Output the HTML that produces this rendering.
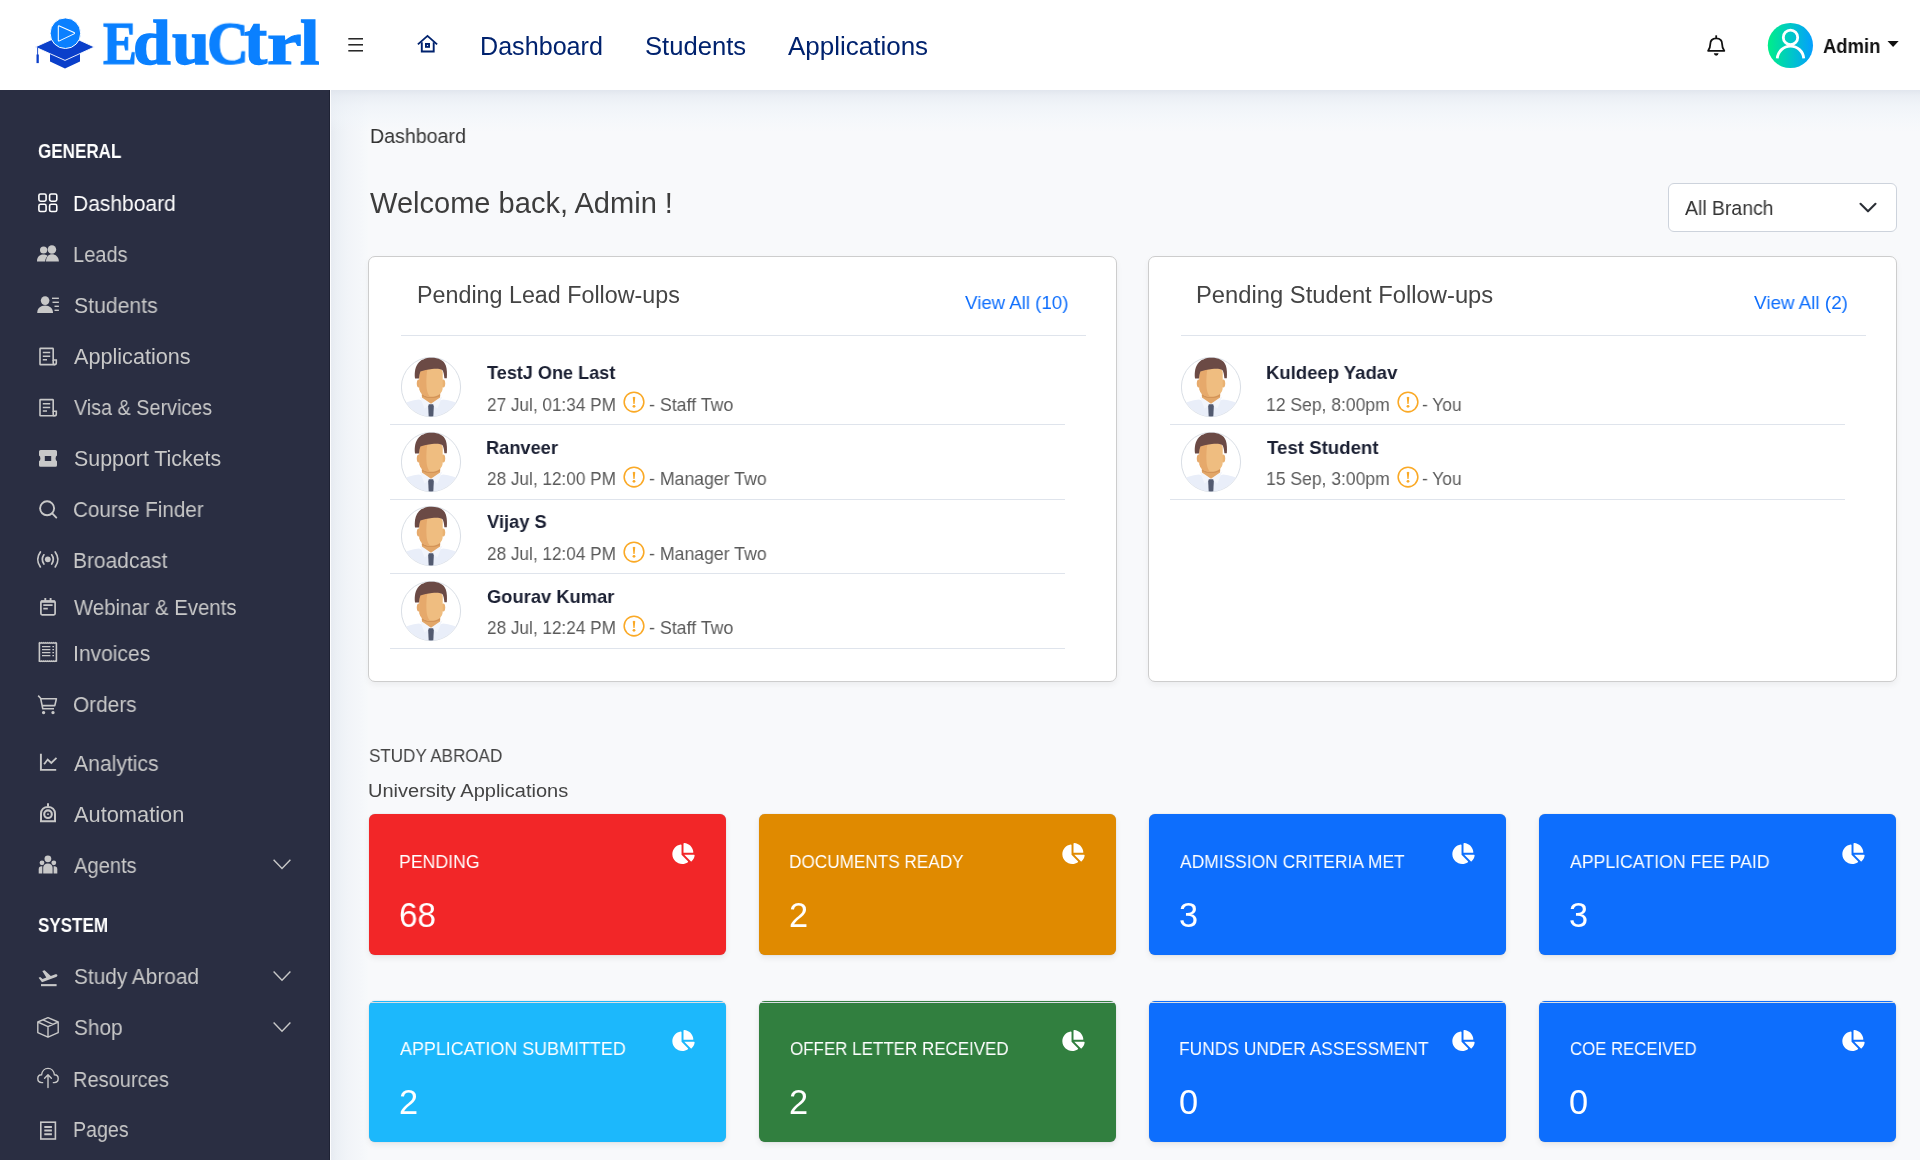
<!DOCTYPE html>
<html><head><meta charset="utf-8"><title>EduCtrl Dashboard</title>
<style>
html,body{margin:0;padding:0;}
body{width:1920px;height:1160px;overflow:hidden;position:relative;background:#f8f9fb;font-family:'Liberation Sans',sans-serif;}
.t{position:absolute;white-space:nowrap;line-height:1;transform-origin:0 0;will-change:transform;}
.abs{position:absolute;}
#hdr{position:absolute;left:0;top:0;width:1920px;height:90px;background:#fff;}
#side{position:absolute;left:0;top:90px;width:330px;height:1070px;background:#2a2e42;}
#sideedge{position:absolute;left:329px;top:90px;width:1px;height:1070px;background:#1e2234;}
#shadeL{position:absolute;left:331px;top:90px;width:37px;height:1070px;background:linear-gradient(90deg,#e7ebf1 0,#ecf0f5 6px,#f1f4f8 16px,#f5f7fa 30px,#f7f9fb 37px);}
#shadeT{position:absolute;left:330px;top:90px;width:1590px;height:42px;background:linear-gradient(180deg,rgba(224,229,237,.95) 0,rgba(230,235,242,.75) 6px,rgba(236,241,247,.6) 16px,rgba(240,245,250,.45) 28px,rgba(248,249,251,0) 42px);}
#whiteline{position:absolute;left:330px;top:90px;width:1px;height:1070px;background:#fdfdfe;}
.card{position:absolute;background:#fff;border:1px solid #cdcdcd;border-radius:7px;box-sizing:border-box;box-shadow:0 3px 6px rgba(0,0,0,.05);}
.hr{position:absolute;height:1px;background:#dfe4ec;}
.stat{position:absolute;width:357.5px;height:141px;border-radius:6px;box-shadow:0 0 1px rgba(0,0,0,.3),0 3px 6px rgba(0,0,0,.07);}
.pie{position:absolute;width:23px;height:21px;margin:-1px 0 0 -0.6px;}
.av{position:absolute;width:61px;height:61px;}
.warn{position:absolute;width:22px;height:22px;}
.si{position:absolute;}
</style></head><body>
<div id="hdr"></div>
<div id="side"></div>
<div id="shadeL"></div>
<div id="shadeT"></div>
<div id="sideedge"></div>
<div id="whiteline"></div>

<!-- logo icon -->
<svg class="abs" style="left:0;top:0" width="100" height="80" viewBox="0 0 100 80">
  <polygon points="50,53 65,60.2 80,53 80,61.5 65,68.6 50,61.5" fill="#0a3fca"/>
  <polygon points="35.2,47 65,33.6 94.4,47 65,60.4" fill="#0a3fca" stroke="#fff" stroke-width="0.9"/>
  <line x1="37.6" y1="47.5" x2="37.6" y2="57" stroke="#0a3fca" stroke-width="0.9"/>
  <rect x="36.5" y="54.5" width="2.3" height="8.6" fill="#0a3fca"/>
  <circle cx="65.4" cy="33.2" r="15.3" fill="#0a80ff" stroke="#fff" stroke-width="1"/>
  <path d="M59.4 25.9 L74 32.5 Q75.1 33.2 74 33.9 L59.4 40.9 Q58.3 41.4 58.3 40.2 L58.3 27 Q58.3 25.4 59.4 25.9 Z" fill="none" stroke="#fff" stroke-width="1.05"/>
</svg>

<!-- hamburger -->
<svg class="abs" style="left:346px;top:36px" width="20" height="18" viewBox="0 0 20 18">
  <rect x="2.3" y="2.1" width="14.7" height="1.4" fill="#111"/>
  <rect x="2.3" y="8.1" width="14.7" height="1.4" fill="#111"/>
  <rect x="2.3" y="14.1" width="14.7" height="1.4" fill="#111"/>
</svg>
<!-- home -->
<svg class="abs" style="left:416px;top:33px" width="24" height="22" viewBox="0 0 24 22">
  <path d="M1.9 11.4 L11.5 2.9 L21.1 11.4" fill="none" stroke="#00226e" stroke-width="1.9" stroke-linejoin="miter"/>
  <path d="M5.8 9.2 V18.5 H17.7 V9.2" fill="none" stroke="#00226e" stroke-width="1.9"/>
  <rect x="9.95" y="10.95" width="3.1" height="2.9" fill="none" stroke="#00226e" stroke-width="1.9"/>
</svg>

<!-- bell -->
<svg class="abs" style="left:1704px;top:33px" width="26" height="26" viewBox="0 0 26 26">
  <path d="M4.1 17.8 C5.9 15.6 6.3 13.6 6.3 11 C6.3 7.3 8.8 5.3 12.2 5.3 C15.6 5.3 18.1 7.3 18.1 11 C18.1 13.6 18.5 15.6 20.3 17.8 Z" fill="none" stroke="#111" stroke-width="1.8" stroke-linejoin="round"/>
  <rect x="11.3" y="2.2" width="1.8" height="3" rx="0.6" fill="#111"/>
  <path d="M9.8 20.3 H14.6 Q14.3 22.7 12.2 22.7 Q10.1 22.7 9.8 20.3 Z" fill="#111"/>
</svg>
<!-- avatar -->
<svg class="abs" style="left:1767px;top:22px" width="47" height="47" viewBox="0 0 47 47">
  <defs><linearGradient id="ag" x1="0" y1="0" x2="1" y2="0"><stop offset="0" stop-color="#00ee88"/><stop offset="0.5" stop-color="#00c8c6"/><stop offset="1" stop-color="#049eff"/></linearGradient></defs>
  <circle cx="23.4" cy="23.5" r="22.6" fill="url(#ag)"/>
  <circle cx="23.5" cy="15.4" r="7.2" fill="none" stroke="#fff" stroke-width="2.8"/>
  <path d="M10.25 36.3 A13.3 13.3 0 0 1 36.75 36.3" fill="none" stroke="#fff" stroke-width="2.8"/>
</svg>
<!-- caret -->
<svg class="abs" style="left:1886px;top:40px" width="14" height="8" viewBox="0 0 14 8">
  <path d="M1.5 1 H12.7 L7.1 7 Z" fill="#111"/>
</svg>

<!-- select -->
<div class="abs" style="left:1668px;top:183px;width:229px;height:49px;box-sizing:border-box;border:1px solid #cdd3dc;border-radius:6px;background:#fff;"></div>
<svg class="abs" style="left:1858px;top:200px" width="20" height="16" viewBox="0 0 20 16">
  <path d="M2.5 3.8 L10 11.3 L17.5 3.8" fill="none" stroke="#2b2f36" stroke-width="2.1" stroke-linecap="round" stroke-linejoin="round"/>
</svg>

<!-- cards -->
<div class="card" style="left:368px;top:256px;width:749px;height:426px;"></div>
<div class="card" style="left:1148px;top:256px;width:749px;height:426px;"></div>
<div class="hr" style="left:401px;top:335px;width:685px;"></div>
<div class="hr" style="left:1181px;top:335px;width:685px;"></div>
<div class="hr" style="left:390px;top:424px;width:675px;"></div>
<div class="hr" style="left:390px;top:499px;width:675px;"></div>
<div class="hr" style="left:390px;top:573px;width:675px;"></div>
<div class="hr" style="left:390px;top:648px;width:675px;"></div>
<div class="hr" style="left:1170px;top:424px;width:675px;"></div>
<div class="hr" style="left:1170px;top:499px;width:675px;"></div>

<svg width="0" height="0" style="position:absolute">
 <defs>
  <symbol id="person" viewBox="0 0 61 61">
   <clipPath id="pc"><circle cx="30" cy="30" r="29.4"/></clipPath>
   <circle cx="30" cy="30" r="29.6" fill="#fff" stroke="#d5dae2" stroke-width="0.9"/>
   <g clip-path="url(#pc)">
    <path d="M-2 62 L-2 50 C3 45.5 10 43.6 18 42.6 L30 46.8 L42 42.6 C50 43.6 57 45.5 62 50 L62 62 Z" fill="#e9eef9"/>
    <path d="M18.6 39.6 L30 46.8 L23.6 51.4 Z" fill="#f2f5fc"/>
    <path d="M41.4 39.6 L30 46.8 L36.4 51.4 Z" fill="#f2f5fc"/>
    <path d="M20.9 33 H39.1 V40.4 L30 46.8 L20.9 40.4 Z" fill="#e2a668"/>
    <path d="M20.9 33 H39.1 V39.2 C36 40.6 33 41 30 41 C27 41 24 40.6 20.9 39.2 Z" fill="#d39458"/>
    <path d="M27.8 47.2 H32.2 L32.8 49.6 L32.2 62 H27.8 L27.2 49.6 Z" fill="#525a70"/>
   </g>
   <ellipse cx="17.8" cy="26.6" rx="2" ry="4" fill="#e6a96b"/>
   <ellipse cx="42.2" cy="26.6" rx="2" ry="4" fill="#eab272"/>
   <path d="M18.3 15.5 C18.3 12 22 10.6 30 10.6 C38 10.6 41.7 12 41.7 15.5 V30.5 C41.7 36.6 36.6 39.8 30 39.8 C23.4 39.8 18.3 36.6 18.3 30.5 Z" fill="#efbd80"/>
   <path d="M18.3 15.5 C18.3 12.6 21 11.2 27 10.8 C25.6 14 25.4 20 25.4 27 C25.4 33 26.6 37.2 29 39.8 C22.8 39.5 18.3 36.4 18.3 30.5 Z" fill="#e6a96b"/>
   <path d="M14 21.6 C13.2 14.6 14.4 9 18 5.2 C19.6 3.6 21 2.6 22.4 2.4 C24.6 1 27.5 0.7 30.5 0.7 C37.5 0.7 43 3.2 44.8 8.4 C46 12 46.2 16.6 45.8 21.2 L43.4 21.2 C43 17.5 42.6 14.8 41.5 13.2 C38.6 11.6 34.8 11.6 31 12.1 C26.5 12.8 22.6 13.4 19.4 14.6 C18.6 16.8 18.2 19 18 21.6 Z" fill="#6b4a45"/>
  </symbol>
  <symbol id="warn" viewBox="0 0 22 22">
   <circle cx="11" cy="11" r="9.85" fill="none" stroke="#faa926" stroke-width="1.55"/>
   <path d="M9.75 6.3 Q11 5.1 12.25 6.3 L11.6 12.9 H10.4 Z" fill="#faa926"/>
   <circle cx="11" cy="15.3" r="1.4" fill="#faa926"/>
  </symbol>
  <symbol id="pie" viewBox="0 0 544 512">
   <path d="M527.79 288H290.5l158.03 158.03c6.04 6.04 15.98 6.53 22.19.68 38.7-36.46 65.32-85.61 73.13-140.86 1.34-9.46-6.51-17.85-16.06-17.85zm-15.83-64.8C503.72 103.74 408.26 8.28 288.8.04 279.68-.59 272 7.1 272 16.24V240h223.77c9.140 0 16.82-7.68 16.19-16.8zM224 288V50.71c0-9.55-8.39-17.4-17.84-16.06C86.99 51.49-4.1 155.6.14 280.37 4.5 408.51 114.83 513.59 243.03 511.980c50.4-.63 96.97-16.87 135.26-44.03 7.9-5.6 8.42-17.23 1.57-24.08L224 288z" fill="#fff"/>
  </symbol>
 </defs>
</svg>

<svg class="av" style="left:401px;top:356.9px"><use href="#person"/></svg>
<svg class="av" style="left:401px;top:431.7px"><use href="#person"/></svg>
<svg class="av" style="left:401px;top:506.3px"><use href="#person"/></svg>
<svg class="av" style="left:401px;top:580.9px"><use href="#person"/></svg>
<svg class="av" style="left:1181px;top:356.9px"><use href="#person"/></svg>
<svg class="av" style="left:1181px;top:431.7px"><use href="#person"/></svg>

<svg class="warn" style="left:623.2px;top:391.4px"><use href="#warn"/></svg>
<svg class="warn" style="left:623.2px;top:466.2px"><use href="#warn"/></svg>
<svg class="warn" style="left:623.2px;top:540.6px"><use href="#warn"/></svg>
<svg class="warn" style="left:623.2px;top:615.3px"><use href="#warn"/></svg>
<svg class="warn" style="left:1397px;top:391.4px"><use href="#warn"/></svg>
<svg class="warn" style="left:1397px;top:466.2px"><use href="#warn"/></svg>

<!-- stat cards -->
<div class="stat" style="left:368.5px;top:813.5px;background:#f22628"></div>
<div class="stat" style="left:758.5px;top:813.5px;background:#e08a00"></div>
<div class="stat" style="left:1148.5px;top:813.5px;background:#0d6efd"></div>
<div class="stat" style="left:1538.5px;top:813.5px;background:#0d6efd"></div>
<div class="stat" style="left:368.5px;top:1000.5px;background:linear-gradient(180deg,transparent 1px,#d9dde3 1px,#d9dde3 2px,transparent 2px) #1cb8fc"></div>
<div class="stat" style="left:758.5px;top:1000.5px;background:linear-gradient(180deg,transparent 1px,#d9dde3 1px,#d9dde3 2px,transparent 2px) #317f3f"></div>
<div class="stat" style="left:1148.5px;top:1000.5px;background:linear-gradient(180deg,transparent 1px,#d9dde3 1px,#d9dde3 2px,transparent 2px) #0d6efd"></div>
<div class="stat" style="left:1538.5px;top:1000.5px;background:linear-gradient(180deg,transparent 1px,#d9dde3 1px,#d9dde3 2px,transparent 2px) #0d6efd"></div>
<svg class="pie" style="left:672.7px;top:843.6px"><use href="#pie"/></svg>
<svg class="pie" style="left:1062.7px;top:843.6px"><use href="#pie"/></svg>
<svg class="pie" style="left:1452.7px;top:843.6px"><use href="#pie"/></svg>
<svg class="pie" style="left:1842.7px;top:843.6px"><use href="#pie"/></svg>
<svg class="pie" style="left:672.7px;top:1030.6px"><use href="#pie"/></svg>
<svg class="pie" style="left:1062.7px;top:1030.6px"><use href="#pie"/></svg>
<svg class="pie" style="left:1452.7px;top:1030.6px"><use href="#pie"/></svg>
<svg class="pie" style="left:1842.7px;top:1030.6px"><use href="#pie"/></svg>

<!-- sidebar icons -->
<svg class="abs" style="left:0;top:90px" width="330" height="1070" viewBox="0 90 330 1070">
 <g fill="none" stroke="#fff" stroke-width="1.6">
  <rect x="38.9" y="194" width="7.2" height="7.2" rx="1.6"/>
  <rect x="49.6" y="194" width="7.2" height="7.2" rx="1.6"/>
  <rect x="38.9" y="204.3" width="7.2" height="7.2" rx="1.6"/>
  <rect x="49.6" y="204.3" width="7.2" height="7.2" rx="1.6"/>
 </g>
 <g fill="#c8c8c8">
  <!-- leads -->
  <circle cx="43.6" cy="250" r="3.6"/>
  <path d="M37 261.5 C37 257 39.5 254.6 43.6 254.6 C45.5 254.6 46.8 255.2 47.5 256 C46 257.4 45.3 259.2 45.2 261.5 Z"/>
  <circle cx="51.9" cy="249.5" r="4.3"/>
  <path d="M46 261.5 C46 257 48.5 254.2 52 254.2 C55.5 254.2 58.9 257 58.9 261.5 Z"/>
  <!-- students -->
  <circle cx="45.1" cy="300.6" r="4.3"/>
  <path d="M37.2 313 C37.2 308.4 40.5 305.6 45.1 305.6 C49.7 305.6 53 308.4 53 313 Z"/>
  <rect x="52" y="297.6" width="6.9" height="1.4"/>
  <rect x="52.5" y="301.6" width="6.4" height="1.4"/>
  <rect x="54.5" y="305.6" width="4.4" height="1.4"/>
  <rect x="54.5" y="309.6" width="4.4" height="1.4"/>
  <!-- ticket -->
  <path d="M39 451.5 Q39 450 40.5 450 H55.5 Q57 450 57 451.5 V455.6 Q55.6 456.2 55.6 458.4 Q55.6 460.6 57 461.2 V465.3 Q57 466.8 55.5 466.8 H40.5 Q39 466.8 39 465.3 V461.2 Q40.4 460.6 40.4 458.4 Q40.4 456.2 39 455.6 Z M44.8 456.1 V460.9 H51.2 V456.1 Z" fill-rule="evenodd"/>
  <!-- broadcast dot -->
  <circle cx="47.8" cy="559.3" r="2.9"/>
  <!-- agents -->
  <circle cx="47.9" cy="858.8" r="3.4"/>
  <circle cx="42" cy="862.8" r="2.4"/>
  <circle cx="53.8" cy="862.8" r="2.4"/>
  <path d="M43.2 873.5 V867.8 C43.2 865 45 863.4 47.9 863.4 C50.8 863.4 52.6 865 52.6 867.8 V873.5 Z"/>
  <path d="M38.7 873.5 V869.2 C38.7 867 39.8 866.3 41.6 866.3 L42.3 866.3 L42.3 873.5 Z"/>
  <path d="M57.3 873.5 V869.2 C57.3 867 56.2 866.3 54.4 866.3 L53.6 866.3 L53.6 873.5 Z"/>
  <!-- study abroad plane -->
  <path d="M38.6 977.8 L40.2 977 L42.6 979 L46.3 977.6 L42.3 971 L44.6 970.2 L50.8 976 L54.8 974.5 C56.3 974 57.4 974.6 57.4 975.4 C57.4 976.2 56.6 976.8 55.4 977.3 L42 982.3 Z"/>
  <rect x="41" y="984.1" width="15.6" height="2.1"/>
 </g>
 <g fill="none" stroke="#c8c8c8" stroke-width="1.6">
  <!-- applications doc -->
  <path d="M40 364.2 V349 Q40 348.4 40.6 348.4 H52.6 Q53.2 348.4 53.2 349 V360 H56.3 V362.7 Q56.3 364.6 54.7 364.6 H40.6 Q40 364.6 40 364.2 Z"/>
  <path d="M53.2 360 V362.7 Q53.2 364.6 54.7 364.6"/>
  <path d="M42.8 352.6 H50.2 M42.8 356.2 H50.2 M42.8 359.8 H47" stroke-width="1.5"/>
  <!-- visa doc -->
  <path d="M40 415.5 V400.2 Q40 399.6 40.6 399.6 H52.6 Q53.2 399.6 53.2 400.2 V411.2 H56.3 V413.9 Q56.3 415.8 54.7 415.8 H40.6 Q40 415.8 40 415.5 Z"/>
  <path d="M53.2 411.2 V413.9 Q53.2 415.8 54.7 415.8"/>
  <path d="M42.8 403.8 H50.2 M42.8 407.4 H50.2 M42.8 411 H47" stroke-width="1.5"/>
  <!-- magnifier -->
  <circle cx="47.1" cy="508.3" r="7" stroke-width="1.9"/>
  <path d="M52.2 513.4 L56.3 517.6" stroke-linecap="round" stroke-width="1.9"/>
  <!-- broadcast waves -->
  <path d="M43.9 554.8 Q40.6 559.4 43.9 564 M51.7 554.8 Q55 559.4 51.7 564 M40.4 551.9 Q35 559.4 40.4 566.9 M55.2 551.9 Q60.6 559.4 55.2 566.9" stroke-linecap="round" stroke-width="1.7"/>
  <!-- calendar -->
  <rect x="40.9" y="601" width="14.2" height="13.8" rx="1.2" stroke-width="1.7"/>
  <path d="M41 601.6 H55" stroke-width="2.4"/>
  <path d="M45.3 598 V601 M50.6 598 V601" stroke-width="1.9"/>
  <path d="M43.3 605.1 H52.6 M43.3 608.7 H47.8" stroke-width="1.8"/>
  <!-- invoices -->
  <path d="M39.4 643 V661.4 M56.4 643 V661.4" stroke-width="1.6"/><path d="M38.8 643.2 L39.80 642.50 L40.80 643.20 L41.80 642.50 L42.80 643.20 L43.80 642.50 L44.80 643.20 L45.80 642.50 L46.80 643.20 L47.80 642.50 L48.80 643.20 L49.80 642.50 L50.80 643.20 L51.80 642.50 L52.80 643.20 L53.80 642.50 L54.80 643.20 L55.80 642.50 L56.80 643.20 M38.8 661.4 L39.80 660.70 L40.80 661.40 L41.80 660.70 L42.80 661.40 L43.80 660.70 L44.80 661.40 L45.80 660.70 L46.80 661.40 L47.80 660.70 L48.80 661.40 L49.80 660.70 L50.80 661.40 L51.80 660.70 L52.80 661.40 L53.80 660.70 L54.80 661.40 L55.80 660.70 L56.80 661.40" stroke-width="1.2"/>
  <path d="M42 646.6 H50.4 M42 649.6 H50.4 M42 652.6 H50.4 M42 655.6 H50.4 M52.4 646.6 H54 M52.4 649.6 H54 M52.4 652.6 H54 M52.4 655.6 H54" stroke-width="1.4"/>
  <!-- cart -->
  <path d="M38.2 695.6 L40.6 698.2 L42.8 708.8 H54 M40.8 698.8 H56.4 L54.8 705.6 H42.2" stroke-linejoin="round"/>
  <circle cx="43.6" cy="712.6" r="0.9" fill="#c8c8c8"/>
  <circle cx="53" cy="712.6" r="0.9" fill="#c8c8c8"/>
  <!-- analytics -->
  <path d="M40.9 753.8 V769.9 H56.2" stroke-width="1.9"/>
  <path d="M44.1 764.2 L47.7 759.5 L51.3 763 L56.5 757.9" stroke-width="1.8"/>
  <!-- automation -->
  <path d="M41 821.2 V813.8 C41 809.6 44 806.9 48 806.9 C52 806.9 55 809.6 55 813.8 V821.2 Z" stroke-width="2"/>
  <circle cx="48" cy="814.2" r="3.8" stroke-width="2.1"/>
  <circle cx="48" cy="814.2" r="0.9" fill="#c8c8c8" stroke="none"/>
  <path d="M48 803.2 V806.6" stroke-width="2"/>
  <!-- shop cube -->
  <path d="M48 1017.6 L58.2 1022 V1032.6 L48 1037.2 L37.8 1032.6 V1022 Z M37.8 1022 L48 1026.6 L58.2 1022 M48 1026.6 V1037.2 M43 1019.8 L53 1024.4" stroke-linejoin="round" stroke-width="1.4"/>
  <!-- cloud upload -->
  <path d="M43.2 1082.6 H41.8 C39.4 1082.6 37.8 1080.8 37.8 1078.6 C37.8 1076.4 39.4 1074.8 41.6 1074.8 C42 1071 44.6 1068.4 48 1068.4 C51.4 1068.4 54 1071 54.4 1074.8 C56.6 1074.8 58.2 1076.4 58.2 1078.6 C58.2 1080.8 56.6 1082.6 54.2 1082.6 H52.8" stroke-width="1.4"/>
  <path d="M48 1087.6 V1074.8 M44.6 1078.2 L48 1074.8 L51.4 1078.2" stroke-width="1.4" stroke-linecap="round" stroke-linejoin="round"/>
  <!-- pages -->
  <rect x="40.8" y="1122.2" width="14.6" height="16.8" stroke-width="1.6"/>
  <path d="M44.3 1126.9 H51.9 M44.3 1130.6 H51.9 M44.3 1134.3 H51.9" stroke-width="2"/>
  <!-- chevrons -->
  <path d="M273.6 859.8 L282 868.6 L290.4 859.8" stroke-width="1.4"/>
  <path d="M273.6 971.4 L282 980.2 L290.4 971.4" stroke-width="1.4"/>
  <path d="M273.6 1022.4 L282 1031.2 L290.4 1022.4" stroke-width="1.4"/>
 </g>
</svg>

<span class=t style="left:102.91px;top:14.40px;font-family:'Liberation Serif', serif;font-size:60.15px;font-weight:700;color:#0a80ff;transform:scale(0.8446,1.0026);transform-origin:0 50.00px;-webkit-text-stroke:1.2px #0a80ff;">E</span>
<span class=t style="left:133.34px;top:14.40px;font-family:'Liberation Serif', serif;font-size:60.15px;font-weight:700;color:#0a80ff;transform:scale(1.1290,1.0439);transform-origin:0 50.00px;-webkit-text-stroke:1.2px #0a80ff;">d</span>
<span class=t style="left:171.90px;top:14.40px;font-family:'Liberation Serif', serif;font-size:60.15px;font-weight:700;color:#0a80ff;transform:scale(1.1312,1.0519);transform-origin:0 50.00px;-webkit-text-stroke:1.2px #0a80ff;">u</span>
<span class=t style="left:206.82px;top:14.40px;font-family:'Liberation Serif', serif;font-size:60.15px;font-weight:700;color:#0a80ff;transform:scale(0.9635,1.0051);transform-origin:0 50.00px;-webkit-text-stroke:1.2px #0a80ff;">C</span>
<span class=t style="left:244.40px;top:14.40px;font-family:'Liberation Serif', serif;font-size:60.15px;font-weight:700;color:#0a80ff;transform:scale(1.1550,1.1647);transform-origin:0 50.00px;-webkit-text-stroke:1.2px #0a80ff;">t</span>
<span class=t style="left:266.80px;top:14.40px;font-family:'Liberation Serif', serif;font-size:60.15px;font-weight:700;color:#0a80ff;transform:scale(1.3000,1.0143);transform-origin:0 50.00px;-webkit-text-stroke:1.2px #0a80ff;">r</span>
<span class=t style="left:300.08px;top:14.40px;font-family:'Liberation Serif', serif;font-size:60.15px;font-weight:700;color:#0a80ff;transform:scale(1.1667,1.0439);transform-origin:0 50.00px;-webkit-text-stroke:1.2px #0a80ff;">l</span>
<span class=t style="left:480.00px;top:34.00px;font-family:'Liberation Sans', sans-serif;font-size:25.14px;font-weight:400;color:#00226e;">Dashboard</span>
<span class=t style="left:644.78px;top:34.00px;font-family:'Liberation Sans', sans-serif;font-size:25.14px;font-weight:400;color:#00226e;transform:scaleX(1.0193);">Students</span>
<span class=t style="left:788.00px;top:34.00px;font-family:'Liberation Sans', sans-serif;font-size:25.14px;font-weight:400;color:#00226e;transform:scaleX(1.0340);">Applications</span>
<span class=t style="left:1823.40px;top:36.00px;font-family:'Liberation Sans', sans-serif;font-size:20.25px;font-weight:700;color:#111;transform:scaleX(0.9102);">Admin</span>
<span class=t style="left:37.80px;top:141.40px;font-family:'Liberation Sans', sans-serif;font-size:20.25px;font-weight:700;color:#fff;transform:scaleX(0.8415);">GENERAL</span>
<span class=t style="left:73.32px;top:193.80px;font-family:'Liberation Sans', sans-serif;font-size:21.37px;font-weight:400;color:#fff;transform:scaleX(0.9843);">Dashboard</span>
<span class=t style="left:73.36px;top:244.50px;font-family:'Liberation Sans', sans-serif;font-size:21.37px;font-weight:400;color:#c8c8c8;transform:scaleX(0.9378);">Leads</span>
<span class=t style="left:74.30px;top:296.10px;font-family:'Liberation Sans', sans-serif;font-size:21.37px;font-weight:400;color:#c8c8c8;transform:scaleX(0.9924);">Students</span>
<span class=t style="left:74.30px;top:347.10px;font-family:'Liberation Sans', sans-serif;font-size:21.37px;font-weight:400;color:#c8c8c8;transform:scaleX(1.0132);">Applications</span>
<span class=t style="left:74.30px;top:397.80px;font-family:'Liberation Sans', sans-serif;font-size:21.37px;font-weight:400;color:#c8c8c8;transform:scaleX(0.9259);">Visa &amp; Services</span>
<span class=t style="left:74.30px;top:449.10px;font-family:'Liberation Sans', sans-serif;font-size:21.37px;font-weight:400;color:#c8c8c8;">Support Tickets</span>
<span class=t style="left:73.33px;top:499.80px;font-family:'Liberation Sans', sans-serif;font-size:21.37px;font-weight:400;color:#c8c8c8;transform:scaleX(0.9656);">Course Finder</span>
<span class=t style="left:73.32px;top:550.80px;font-family:'Liberation Sans', sans-serif;font-size:21.37px;font-weight:400;color:#c8c8c8;transform:scaleX(0.9818);">Broadcast</span>
<span class=t style="left:74.30px;top:597.70px;font-family:'Liberation Sans', sans-serif;font-size:21.37px;font-weight:400;color:#c8c8c8;transform:scaleX(0.9524);">Webinar &amp; Events</span>
<span class=t style="left:73.31px;top:644.00px;font-family:'Liberation Sans', sans-serif;font-size:21.37px;font-weight:400;color:#c8c8c8;transform:scaleX(0.9860);">Invoices</span>
<span class=t style="left:73.33px;top:694.70px;font-family:'Liberation Sans', sans-serif;font-size:21.37px;font-weight:400;color:#c8c8c8;transform:scaleX(0.9749);">Orders</span>
<span class=t style="left:74.30px;top:753.90px;font-family:'Liberation Sans', sans-serif;font-size:21.37px;font-weight:400;color:#c8c8c8;transform:scaleX(0.9907);">Analytics</span>
<span class=t style="left:74.30px;top:804.60px;font-family:'Liberation Sans', sans-serif;font-size:21.37px;font-weight:400;color:#c8c8c8;transform:scaleX(1.0208);">Automation</span>
<span class=t style="left:74.30px;top:856.00px;font-family:'Liberation Sans', sans-serif;font-size:21.37px;font-weight:400;color:#c8c8c8;transform:scaleX(0.9420);">Agents</span>
<span class=t style="left:74.30px;top:967.30px;font-family:'Liberation Sans', sans-serif;font-size:21.37px;font-weight:400;color:#c8c8c8;transform:scaleX(0.9755);">Study Abroad</span>
<span class=t style="left:74.30px;top:1018.40px;font-family:'Liberation Sans', sans-serif;font-size:21.37px;font-weight:400;color:#c8c8c8;transform:scaleX(0.9734);">Shop</span>
<span class=t style="left:73.36px;top:1069.60px;font-family:'Liberation Sans', sans-serif;font-size:21.37px;font-weight:400;color:#c8c8c8;transform:scaleX(0.9391);">Resources</span>
<span class=t style="left:73.38px;top:1120.40px;font-family:'Liberation Sans', sans-serif;font-size:21.37px;font-weight:400;color:#c8c8c8;transform:scaleX(0.9171);">Pages</span>
<span class=t style="left:38.40px;top:915.90px;font-family:'Liberation Sans', sans-serif;font-size:19.55px;font-weight:700;color:#fff;transform:scaleX(0.8724);">SYSTEM</span>
<span class=t style="left:370.01px;top:126.80px;font-family:'Liberation Sans', sans-serif;font-size:19.83px;font-weight:400;color:#333;transform:scaleX(0.9897);">Dashboard</span>
<span class=t style="left:369.50px;top:188.70px;font-family:'Liberation Sans', sans-serif;font-size:28.91px;font-weight:400;color:#3d3d3d;transform:scaleX(1.0048);">Welcome back, Admin !</span>
<span class=t style="left:1685.00px;top:199.00px;font-family:'Liberation Sans', sans-serif;font-size:19.83px;font-weight:400;color:#333;transform:scaleX(0.9794);">All Branch</span>
<span class=t style="left:417.00px;top:284.00px;font-family:'Liberation Sans', sans-serif;font-size:23.18px;font-weight:400;color:#444;transform:scaleX(1.0050);">Pending Lead Follow-ups</span>
<span class=t style="left:964.50px;top:292.90px;font-family:'Liberation Sans', sans-serif;font-size:19.13px;font-weight:400;color:#0d6efd;transform:scaleX(0.9772);">View All (10)</span>
<span class=t style="left:1195.97px;top:284.00px;font-family:'Liberation Sans', sans-serif;font-size:23.18px;font-weight:400;color:#444;transform:scaleX(1.0255);">Pending Student Follow-ups</span>
<span class=t style="left:1754.30px;top:292.90px;font-family:'Liberation Sans', sans-serif;font-size:19.13px;font-weight:400;color:#0d6efd;transform:scaleX(0.9865);">View All (2)</span>
<span class=t style="left:486.80px;top:362.80px;font-family:'Liberation Sans', sans-serif;font-size:19.13px;font-weight:700;color:#1b2033;transform:scaleX(0.9463);">TestJ One Last</span>
<span class=t style="left:486.80px;top:396.00px;font-family:'Liberation Sans', sans-serif;font-size:18.72px;font-weight:400;color:#5a5a5a;transform:scaleX(0.9186);">27 Jul, 01:34 PM</span>
<span class=t style="left:649.00px;top:396.00px;font-family:'Liberation Sans', sans-serif;font-size:18.72px;font-weight:400;color:#5a5a5a;transform:scaleX(0.9510);">- Staff Two</span>
<span class=t style="left:485.85px;top:437.80px;font-family:'Liberation Sans', sans-serif;font-size:19.13px;font-weight:700;color:#1b2033;transform:scaleX(0.9542);">Ranveer</span>
<span class=t style="left:486.80px;top:470.00px;font-family:'Liberation Sans', sans-serif;font-size:18.72px;font-weight:400;color:#5a5a5a;transform:scaleX(0.9186);">28 Jul, 12:00 PM</span>
<span class=t style="left:649.00px;top:470.00px;font-family:'Liberation Sans', sans-serif;font-size:18.72px;font-weight:400;color:#5a5a5a;transform:scaleX(0.9458);">- Manager Two</span>
<span class=t style="left:486.80px;top:511.80px;font-family:'Liberation Sans', sans-serif;font-size:19.13px;font-weight:700;color:#1b2033;transform:scaleX(0.9581);">Vijay S</span>
<span class=t style="left:486.80px;top:544.70px;font-family:'Liberation Sans', sans-serif;font-size:18.72px;font-weight:400;color:#5a5a5a;transform:scaleX(0.9186);">28 Jul, 12:04 PM</span>
<span class=t style="left:649.00px;top:544.70px;font-family:'Liberation Sans', sans-serif;font-size:18.72px;font-weight:400;color:#5a5a5a;transform:scaleX(0.9458);">- Manager Two</span>
<span class=t style="left:486.80px;top:586.90px;font-family:'Liberation Sans', sans-serif;font-size:19.13px;font-weight:700;color:#1b2033;transform:scaleX(0.9595);">Gourav Kumar</span>
<span class=t style="left:486.80px;top:618.90px;font-family:'Liberation Sans', sans-serif;font-size:18.72px;font-weight:400;color:#5a5a5a;transform:scaleX(0.9186);">28 Jul, 12:24 PM</span>
<span class=t style="left:649.00px;top:618.90px;font-family:'Liberation Sans', sans-serif;font-size:18.72px;font-weight:400;color:#5a5a5a;transform:scaleX(0.9510);">- Staff Two</span>
<span class=t style="left:1265.83px;top:362.80px;font-family:'Liberation Sans', sans-serif;font-size:19.13px;font-weight:700;color:#1b2033;transform:scaleX(0.9689);">Kuldeep Yadav</span>
<span class=t style="left:1265.86px;top:396.00px;font-family:'Liberation Sans', sans-serif;font-size:18.72px;font-weight:400;color:#5a5a5a;transform:scaleX(0.9366);">12 Sep, 8:00pm</span>
<span class=t style="left:1422.40px;top:396.00px;font-family:'Liberation Sans', sans-serif;font-size:18.72px;font-weight:400;color:#5a5a5a;transform:scaleX(0.9299);">- You</span>
<span class=t style="left:1266.80px;top:437.80px;font-family:'Liberation Sans', sans-serif;font-size:19.13px;font-weight:700;color:#1b2033;transform:scaleX(0.9754);">Test Student</span>
<span class=t style="left:1265.86px;top:470.00px;font-family:'Liberation Sans', sans-serif;font-size:18.72px;font-weight:400;color:#5a5a5a;transform:scaleX(0.9366);">15 Sep, 3:00pm</span>
<span class=t style="left:1422.40px;top:470.00px;font-family:'Liberation Sans', sans-serif;font-size:18.72px;font-weight:400;color:#5a5a5a;transform:scaleX(0.9299);">- You</span>
<span class=t style="left:369.40px;top:745.90px;font-family:'Liberation Sans', sans-serif;font-size:19.27px;font-weight:400;color:#444;transform:scaleX(0.8849);">STUDY ABROAD</span>
<span class=t style="left:368.36px;top:780.90px;font-family:'Liberation Sans', sans-serif;font-size:19.27px;font-weight:400;color:#444;transform:scaleX(1.0387);">University Applications</span>
<span class=t style="left:399.27px;top:851.60px;font-family:'Liberation Sans', sans-serif;font-size:18.99px;font-weight:400;color:#fff;transform:scaleX(0.9324);">PENDING</span>
<span class=t style="left:399.03px;top:897.50px;font-family:'Liberation Sans', sans-serif;font-size:34.36px;font-weight:400;color:#fff;transform:scaleX(0.9695);">68</span>
<span class=t style="left:789.30px;top:851.60px;font-family:'Liberation Sans', sans-serif;font-size:18.99px;font-weight:400;color:#fff;transform:scaleX(0.9045);">DOCUMENTS READY</span>
<span class=t style="left:789.00px;top:897.50px;font-family:'Liberation Sans', sans-serif;font-size:34.36px;font-weight:400;color:#fff;">2</span>
<span class=t style="left:1180.20px;top:851.60px;font-family:'Liberation Sans', sans-serif;font-size:18.99px;font-weight:400;color:#fff;transform:scaleX(0.9181);">ADMISSION CRITERIA MET</span>
<span class=t style="left:1179.00px;top:897.50px;font-family:'Liberation Sans', sans-serif;font-size:34.36px;font-weight:400;color:#fff;">3</span>
<span class=t style="left:1570.20px;top:851.60px;font-family:'Liberation Sans', sans-serif;font-size:18.99px;font-weight:400;color:#fff;transform:scaleX(0.9308);">APPLICATION FEE PAID</span>
<span class=t style="left:1569.00px;top:897.50px;font-family:'Liberation Sans', sans-serif;font-size:34.36px;font-weight:400;color:#fff;">3</span>
<span class=t style="left:400.20px;top:1038.60px;font-family:'Liberation Sans', sans-serif;font-size:18.99px;font-weight:400;color:#fff;transform:scaleX(0.9439);">APPLICATION SUBMITTED</span>
<span class=t style="left:399.00px;top:1084.50px;font-family:'Liberation Sans', sans-serif;font-size:34.36px;font-weight:400;color:#fff;">2</span>
<span class=t style="left:790.20px;top:1038.60px;font-family:'Liberation Sans', sans-serif;font-size:18.99px;font-weight:400;color:#fff;transform:scaleX(0.8934);">OFFER LETTER RECEIVED</span>
<span class=t style="left:789.00px;top:1084.50px;font-family:'Liberation Sans', sans-serif;font-size:34.36px;font-weight:400;color:#fff;">2</span>
<span class=t style="left:1179.28px;top:1038.60px;font-family:'Liberation Sans', sans-serif;font-size:18.99px;font-weight:400;color:#fff;transform:scaleX(0.9171);">FUNDS UNDER ASSESSMENT</span>
<span class=t style="left:1179.00px;top:1084.50px;font-family:'Liberation Sans', sans-serif;font-size:34.36px;font-weight:400;color:#fff;">0</span>
<span class=t style="left:1570.20px;top:1038.60px;font-family:'Liberation Sans', sans-serif;font-size:18.99px;font-weight:400;color:#fff;transform:scaleX(0.8826);">COE RECEIVED</span>
<span class=t style="left:1569.00px;top:1084.50px;font-family:'Liberation Sans', sans-serif;font-size:34.36px;font-weight:400;color:#fff;">0</span>
</body></html>
